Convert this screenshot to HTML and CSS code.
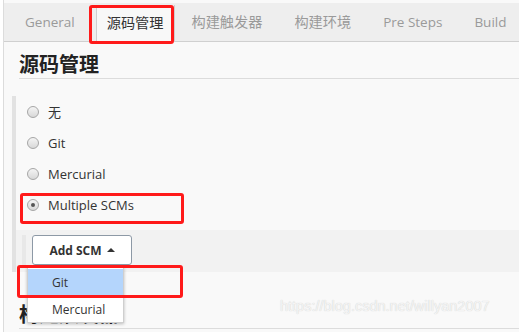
FILE: index.html
```html
<!DOCTYPE html>
<html>
<head>
<meta charset="utf-8">
<link rel="stylesheet" href="styles.css">
</head>
<body>
<div class="stage">
  <div class="page">
    <div class="tabs">
      <div class="tab">General</div>
      <div class="tab active cjk">源码管理</div>
      <div class="tab cjk">构建触发器</div>
      <div class="tab cjk">构建环境</div>
      <div class="tab">Pre Steps</div>
      <div class="tab">Build</div>
    </div>
    <div class="content">
      <h2 class="section-title">源码管理</h2>
      <div class="scm-block">
        <div class="radio-list">
          <div class="radio-row"><span class="radio"></span><span>无</span></div>
          <div class="radio-row"><span class="radio"></span><span>Git</span></div>
          <div class="radio-row"><span class="radio"></span><span>Mercurial</span></div>
          <div class="radio-row"><span class="radio checked"></span><span>Multiple SCMs</span></div>
        </div>
        <div class="band">
          <div class="band-inner">
            <button class="add-btn">Add SCM <span class="caret"></span></button>
          </div>
        </div>
      </div>
      <h2 class="section-title next">构建触发器</h2>
    </div>
  </div>

  <div class="menu">
    <div class="menu-item hl">Git</div>
    <div class="menu-item">Mercurial</div>
  </div>

  <div class="mark mark-tab"></div>
  <div class="mark mark-multi"></div>
  <div class="mark mark-git"></div>

  <div class="watermark">https://blog.csdn.net/willyan2007</div>
</div>
</body>
</html>
```

FILE: styles.css
```css
* { box-sizing: border-box; }
html, body { margin: 0; padding: 0; background: #fff; }
body {
  font-family: "Open Sans", "Noto Sans CJK SC", sans-serif;
  font-size: 13px;
  color: #333;
}
.stage {
  position: relative;
  width: 519px;
  height: 332px;
  overflow: hidden;
}
.page {
  margin-left: 3px;
  border-left: 1px solid #dcdcdc;
  height: 332px;
  background: #f9f9f9;
  padding-top: 3px;
}
.tabs {
  display: flex;
  height: 39px;
  background: #eeeeee;
  border-bottom: 1px solid #d0d0d0;
  padding-left: 5px;
}
.tab {
  height: 38px;
  line-height: 38px;
  padding: 0 16px;
  color: #9a9a9a;
  font-size: 13.5px;
  white-space: nowrap;
}
.tab.cjk {
  font-size: 14.2px;
}
.tab.active {
  color: #333;
  background: #f8f8f8;
  border-left: 1px solid #cfcfcf;
  border-right: 1px solid #cfcfcf;
  margin-top: 2px;
  height: 37px;
  line-height: 35px;
  margin-bottom: -1px;
  padding: 0 11px 0 10px;
  margin-left: 5px;
}
.content {
  padding-left: 8px;
}
.section-title {
  margin: 10px 0 0 7px;
  font-size: 20px;
  line-height: 26px;
  height: 27px;
  font-weight: bold;
  color: #222;
  border-bottom: 1px solid #dcdcdc;
}
.scm-block {
  margin-top: 17px;
  border-left: 4px solid #e2e2e2;
}
.radio-list {
  padding-left: 11px;
}
.radio-row {
  height: 31px;
  display: flex;
  align-items: center;
  gap: 9px;
  font-size: 13px;
  color: #333;
}
.radio {
  width: 12px;
  height: 12px;
  border-radius: 50%;
  border: 1px solid #a6a6a6;
  background: linear-gradient(#f4f4f4, #d8d8d8);
  position: relative;
  flex: none;
}
.radio.checked::after {
  content: "";
  position: absolute;
  left: 3px;
  top: 3px;
  width: 4px;
  height: 4px;
  border-radius: 50%;
  background: #555;
}
.band {
  margin-top: 10px;
  height: 42px;
  background: #f2f2f2;
  padding-top: 5px;
}
.band-inner {
  margin-left: 6px;
  border-left: 4px solid #e8e8e8;
  padding-left: 6px;
  height: 30px;
}
.add-btn {
  width: 100px;
  height: 30px;
  background: #fff;
  border: 1.5px solid #8d99a6;
  border-radius: 3px;
  font-family: "Open Sans", sans-serif;
  font-size: 12px;
  font-weight: bold;
  color: #333;
  padding: 0;
  display: flex;
  align-items: center;
  justify-content: center;
  gap: 5px;
}
.caret {
  width: 0;
  height: 0;
  border-left: 4px solid transparent;
  border-right: 4px solid transparent;
  border-bottom: 4px solid #333;
}
.section-title.next {
  margin-top: 30px;
}
.menu {
  position: absolute;
  left: 27px;
  top: 267px;
  width: 97px;
  height: 56px;
  background: #fff;
  border: 1px solid #cfcfcf;
  box-shadow: 0 1px 3px rgba(0,0,0,0.25);
  padding-top: 1px;
}
.menu-item {
  height: 27px;
  line-height: 27px;
  padding-left: 24px;
  font-size: 12px;
  color: #333;
}
.menu-item.hl {
  background: #b4d5fc;
}
.mark {
  position: absolute;
  border: 3px solid #ff1a1a;
  border-radius: 3px;
}
.mark-tab { left: 89px; top: 5px; width: 85px; height: 39px; }
.mark-multi { left: 20px; top: 193px; width: 164px; height: 31px; }
.mark-git { left: 17px; top: 265px; width: 166px; height: 33px; }
.watermark {
  position: absolute;
  left: 280px;
  top: 298px;
  font-family: "Liberation Sans", sans-serif;
  font-size: 14.5px;
  color: #f4f4f4;
  text-shadow: 0 0 1px #c8c8c8;
  white-space: nowrap;
}
```
